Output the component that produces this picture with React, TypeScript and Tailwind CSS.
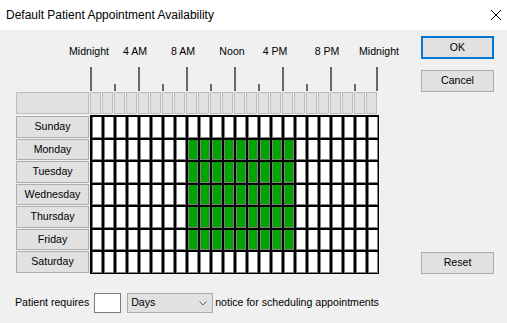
import React from 'react';

const days = ['Sunday', 'Monday', 'Tuesday', 'Wednesday', 'Thursday', 'Friday', 'Saturday'];
const hours = Array.from({ length: 24 }, (_, i) => i);
const ticks = Array.from({ length: 13 }, (_, i) => i * 2);
const labels = [
  { text: 'Midnight', x: -1 },
  { text: '4 AM', x: 45 },
  { text: '8 AM', x: 93 },
  { text: 'Noon', x: 142 },
  { text: '4 PM', x: 185 },
  { text: '8 PM', x: 237 },
  { text: 'Midnight', x: 289 },
];
const rowHeights = ['h-[23px]', 'h-[22px]', 'h-[23px]', 'h-[22px]', 'h-[23px]', 'h-[22px]', 'h-[23px]'];

function available(day: number, hour: number) {
  return day >= 1 && day <= 5 && hour >= 8 && hour <= 16;
}

function WinButton({ label, focused, className }: { label: string; focused?: boolean; className?: string }) {
  return (
    <div
      className={`flex w-[73px] items-center justify-center bg-[#e1e1e1] text-black ${focused ? 'border-2 border-[#0078d7]' : 'border border-[#adadad]'} ${className ?? ''}`}
    >
      {label}
    </div>
  );
}

export default function App() {
  return (
    <div className="h-[323px] w-[507px] overflow-hidden bg-[#f0f0f0] text-[10.6px] text-black [font-family:'Liberation_Sans',Arial,sans-serif]">
      <div className="flex h-[30px] items-center justify-between bg-white pl-[6px] pr-[4px]">
        <span className="text-[12px] text-black">Default Patient Appointment Availability</span>
        <svg width="12" height="12" viewBox="0 0 12 12" className="mr-[1px]">
          <path d="M1 1 L11 11 M11 1 L1 11" stroke="#000" strokeWidth="1" fill="none" />
        </svg>
      </div>

      <div className="flex">
        <div className="w-[379px] pl-[16px]">
          <div className="relative ml-[74px] h-[62px] w-[288px]">
            {labels.map((l, i) => (
              <span key={i} className="absolute top-[15px] -translate-x-1/2 whitespace-nowrap leading-[13px]" style={{ left: l.x }}>
                {l.text}
              </span>
            ))}
            {ticks.map((h) => (
              <div
                key={h}
                className={`absolute w-[2px] bg-[#696969] ${h % 4 === 0 ? 'top-[37px] h-[24px]' : 'top-[54px] h-[7px]'}`}
                style={{ left: Math.min(h * 12, 286) }}
              />
            ))}
          </div>

          <div className="flex h-[22px]">
            <div className="w-[73px] border border-[#bdbdbd] bg-[#e1e1e1]" />
            <div className="ml-[1px] flex">
              {hours.map((h) => (
                <div key={h} className="w-[12px] pr-[1px]">
                  <div className="h-full border border-[#bdbdbd] bg-[#e1e1e1]" />
                </div>
              ))}
            </div>
          </div>

          <div className="mt-[1px] flex">
            <div className="flex w-[73px] flex-col">
              {days.map((d, i) => (
                <div key={d} className={`${rowHeights[i]} pt-[1px]`}>
                  <WinButton label={d} className="h-full" />
                </div>
              ))}
            </div>
            <div className="ml-[1px] flex flex-col border-r border-b border-black bg-black">
              {days.map((d, di) => (
                <div key={d} className={`flex ${rowHeights[di]}`}>
                  {hours.map((h) => (
                    <div key={h} className="w-[12px] border-l-2 border-t-2 border-black">
                      <div
                        className={`h-full border-r border-b border-l border-[#808080] ${available(di, h) ? 'bg-[#00a600]' : 'bg-white'}`}
                      />
                    </div>
                  ))}
                </div>
              ))}
            </div>
          </div>
        </div>

        <div className="ml-[42px] flex flex-col pt-[6px]">
          <WinButton label="OK" focused className="h-[23px]" />
          <WinButton label="Cancel" className="mt-[11px] h-[22px]" />
          <WinButton label="Reset" className="mt-[160px] h-[22px]" />
        </div>
      </div>

      <div className="mt-[19px] flex h-[20px] items-center pl-[15px]">
        <span>Patient requires</span>
        <div className="ml-[5px] h-[20px] w-[27px] border border-[#7a7a7a] bg-white" />
        <div className="ml-[6px] flex h-[20px] w-[86px] items-center justify-between border border-[#adadad] bg-[#e1e1e1] pl-[3px] pr-[5px]">
          <span>Days</span>
          <svg width="8" height="5" viewBox="0 0 8 5">
            <path d="M0.5 0.5 L4 4 L7.5 0.5" stroke="#606060" strokeWidth="1" fill="none" />
          </svg>
        </div>
        <span className="ml-[2px]">notice for scheduling appointments</span>
      </div>
    </div>
  );
}
